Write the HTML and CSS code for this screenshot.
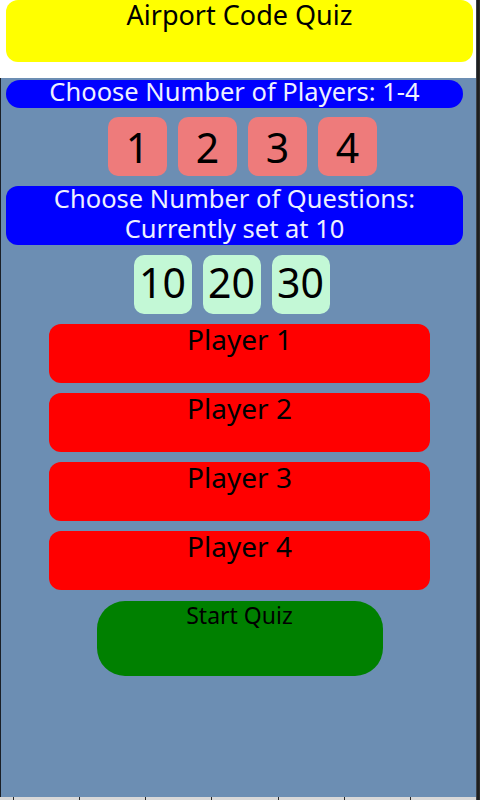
FILE: index.html
```html
<!DOCTYPE html>
<html>
<head>
<meta charset="utf-8">
<link rel="stylesheet" href="styles.css">
</head>
<body>
<div class="screen">
  <div class="main">
    <header class="header">
      <div class="title">Airport Code Quiz</div>
    </header>
    <section class="content">
      <div class="label label-one">Choose Number of Players: 1-4</div>
      <div class="row row-players">
        <div class="sq sq-pink">1</div>
        <div class="sq sq-pink">2</div>
        <div class="sq sq-pink">3</div>
        <div class="sq sq-pink">4</div>
      </div>
      <div class="label label-two">
        <div class="label-line">Choose Number of Questions:</div>
        <div class="label-line">Currently set at 10</div>
      </div>
      <div class="row row-questions">
        <div class="sq sq-mint">10</div>
        <div class="sq sq-mint">20</div>
        <div class="sq sq-mint">30</div>
      </div>
      <div class="players">
        <div class="player">Player 1</div>
        <div class="player">Player 2</div>
        <div class="player">Player 3</div>
        <div class="player">Player 4</div>
      </div>
      <div class="start">Start Quiz</div>
    </section>
    <div class="softbar">
      <span class="s0"></span><span></span><span></span><span></span><span></span><span></span><span></span><span></span>
    </div>
  </div>
  <div class="edge"></div>
</div>
</body>
</html>
```

FILE: styles.css
```css
html, body {
  margin: 0;
  padding: 0;
}
body {
  width: 480px;
  height: 800px;
  overflow: hidden;
  font-family: "Noto Sans", "Open Sans", "DejaVu Sans", sans-serif;
  background: #6c8eb3;
}
.screen {
  display: flex;
  width: 480px;
  height: 800px;
}
.main {
  width: 476px;
  display: flex;
  flex-direction: column;
}
.edge {
  width: 4px;
  background: linear-gradient(to right, #5a6470 0, #1e1e1e 1px, #1e1e1e 3px, #3a3a3a 4px);
}
.header {
  background: #ffffff;
  height: 78px;
  padding: 0 3px 0 6px;
  box-sizing: border-box;
}
.title {
  background: #ffff00;
  height: 62px;
  border-radius: 12px;
  text-align: center;
  font-size: 27px;
  line-height: 30px;
  color: #000;
}
.content {
  flex: 1;
  border-left: 1px solid #1a1f26;
  padding-top: 2px;
  display: flex;
  flex-direction: column;
  align-items: center;
}
.label {
  background: #0000ff;
  color: #eef0ff;
  text-align: center;
  font-size: 25.5px;
  width: 457px;
  align-self: flex-start;
  margin-left: 5px;
  box-sizing: border-box;
}
.label-one {
  height: 28px;
  line-height: 23px;
  border-radius: 14px;
}
.label-two {
  height: 59px;
  line-height: 30px;
  border-radius: 12px;
}
.label-two .label-line:first-child {
  margin-top: -3px;
}
.row {
  display: flex;
}
.row-players {
  margin: 9px 0 10px 8px;
  gap: 11px;
}
.row-questions {
  margin: 10px 0 10px -14px;
  gap: 11px;
}
.sq {
  width: 59px;
  height: 59px;
  border-radius: 10px;
  text-align: center;
  font-size: 41px;
  color: #000;
}
.sq-pink {
  background: #ee7b7b;
  line-height: 60px;
}
.sq-mint {
  background: #c3f8d6;
  width: 58px;
  line-height: 54px;
}
.players {
  display: flex;
  flex-direction: column;
  gap: 10px;
  margin-left: 2px;
}
.player {
  width: 381px;
  height: 59px;
  background: #ff0000;
  border-radius: 12px;
  text-align: center;
  font-size: 28px;
  line-height: 30px;
  color: #000;
}
.start {
  margin-top: 11px;
  margin-left: 2px;
  width: 286px;
  height: 75px;
  background: #008000;
  border-radius: 28px;
  text-align: center;
  font-size: 23px;
  line-height: 28px;
  color: #000;
}
.softbar {
  height: 3px;
  display: flex;
  background: #2a2a2a;
  gap: 1px;
}
.softbar span {
  flex: 1;
  background: #d8d8d8;
}
.softbar .s0 {
  flex: 0 0 13px;
}
```
